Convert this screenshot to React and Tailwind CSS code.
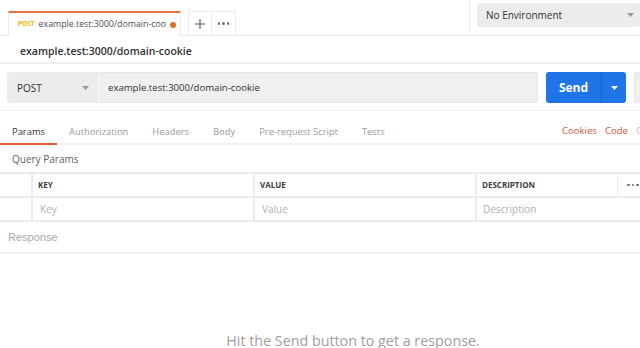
import React from "react";

const Caret = ({ className = "" }) => (
  <svg width="7" height="4" viewBox="0 0 7 4" className={className}>
    <path d="M0 0 L7 0 L3.5 4 Z" fill="currentColor" />
  </svg>
);

const Dots = ({ color = "bg-[#707070]" }) => (
  <>
    <span className={`w-[2.5px] h-[2.5px] rounded-full ${color}`} />
    <span className={`w-[2.5px] h-[2.5px] rounded-full ${color}`} />
    <span className={`w-[2.5px] h-[2.5px] rounded-full ${color}`} />
  </>
);

export default function App() {
  return (
    <div
      className="w-[640px] h-[348px] overflow-hidden bg-white flex flex-col text-[#505050]"
      style={{ fontFamily: '"Open Sans", "Noto Sans", sans-serif' }}
    >
      {/* Top tab bar */}
      <div className="h-[36px] flex shrink-0 border-b border-[#e8e8e8]">
        <div className="flex-1 flex items-end pl-[8px]">
          <div className="w-[173px] h-[25px] -mb-px bg-white border-t-2 border-[#e8703a] border-x border-x-[#ececec] flex items-center pl-[9px] pr-[4px]">
            <span className="text-[6.5px] font-bold text-[#ffb400] mr-[4px] leading-none">POST</span>
            <span className="text-[8.8px] text-[#505050] whitespace-nowrap leading-none">example.test:3000/domain-coo</span>
            <span className="ml-auto w-[6px] h-[6px] rounded-full bg-[#e07028]" />
          </div>
          <div className="ml-[7px] flex h-[24px] border border-[#ececec] border-b-0">
            <div className="w-[23px] flex items-center justify-center border-r border-[#ececec] text-[#606060]">
              <svg width="10" height="10" viewBox="0 0 10 10">
                <path d="M5 0 V10 M0 5 H10" stroke="currentColor" strokeWidth="1.2" />
              </svg>
            </div>
            <div className="w-[23px] flex items-center justify-center gap-[2px]">
              <Dots />
            </div>
          </div>
        </div>
        <div className="w-[171px] border-l border-[#ececec] pl-[7px] pt-[3px]">
          <div className="w-[163px] h-[24px] bg-[#ececec] rounded-[3px] flex items-center pl-[9px] pr-[6px]">
            <span className="text-[10px] text-[#333] leading-none">No Environment</span>
            <Caret className="ml-auto text-[#999]" />
          </div>
        </div>
      </div>

      {/* Request title */}
      <div className="h-[28px] shrink-0 flex items-center pt-[5px] pl-[20px] border-b-2 border-[#f0f0f0]">
        <span className="text-[10.5px] font-semibold text-[#333] leading-none">example.test:3000/domain-cookie</span>
      </div>

      {/* URL row */}
      <div className="h-[47px] shrink-0 flex items-start pt-[8px] pl-[7px] border-b border-[#f0f0f0]">
        <div className="w-[92px] h-[31px] bg-[#ececec] rounded-l-[3px] flex items-center pl-[10px] pr-[9px] border-r border-[#f8f8f8]">
          <span className="text-[10px] text-[#333] leading-none">POST</span>
          <Caret className="ml-auto text-[#999]" />
        </div>
        <div className="w-[439px] h-[31px] bg-[#f0f0f0] rounded-r-[3px] border border-[#e6e6e6] border-l-0 flex items-center pl-[9px]">
          <span className="text-[9.6px] text-[#333] leading-none">example.test:3000/domain-cookie</span>
        </div>
        <div className="ml-[8px] w-[80px] h-[31px] bg-[#1f74e8] rounded-[3px] flex items-center text-white">
          <div className="w-[56px] flex items-center justify-center h-full border-r border-[#1a63c8]">
            <span className="text-[12px] font-bold leading-none">Send</span>
          </div>
          <div className="flex-1 flex items-center justify-center">
            <Caret className="text-white" />
          </div>
        </div>
        <div className="ml-[8px] flex-1 h-[31px] bg-[#f0f0f0] border border-[#e6e6e6] border-r-0 rounded-l-[3px]" />
      </div>

      {/* Tabs */}
      <div className="h-[34px] shrink-0 flex items-end border-b-2 border-[#f0f0f0]">
        <div className="flex text-[9.4px] leading-none">
          <div className="px-[12px] pb-[7px] pt-[6px] text-[#333] border-b-2 border-[#e05a35] -mb-[2px]">Params</div>
          <div className="px-[12px] pb-[7px] pt-[6px] text-[#9a9a9a]">Authorization</div>
          <div className="px-[12px] pb-[7px] pt-[6px] text-[#9a9a9a]">Headers</div>
          <div className="px-[12px] pb-[7px] pt-[6px] text-[#9a9a9a]">Body</div>
          <div className="px-[12px] pb-[7px] pt-[6px] text-[#9a9a9a]">Pre-request Script</div>
          <div className="px-[12px] pb-[7px] pt-[6px] text-[#9a9a9a]">Tests</div>
        </div>
        <div className="ml-auto flex text-[9.6px] leading-none pb-[7px] whitespace-nowrap">
          <span className="text-[#d0573a]">Cookies</span>
          <span className="ml-[8px] text-[#d0573a]">Code</span>
          <span className="ml-[8px] text-[#c0c0c0] w-[4px] overflow-hidden">C</span>
        </div>
      </div>

      {/* Query params label */}
      <div className="h-[27px] shrink-0 flex items-center pl-[12px]">
        <span className="text-[10px] text-[#606060] leading-none">Query Params</span>
      </div>

      {/* Table */}
      <div className="shrink-0 border-y-2 border-[#ececec]">
        <div className="h-[24px] flex border-b-2 border-[#ececec]">
          <div className="w-[33px] border-r-2 border-[#ececec]" />
          <div className="w-[222px] border-r-2 border-[#ececec] flex items-center pl-[5px] text-[8px] font-bold text-[#404040]">KEY</div>
          <div className="w-[222px] border-r-2 border-[#ececec] flex items-center pl-[5px] text-[8px] font-bold text-[#404040]">VALUE</div>
          <div className="w-[141px] border-r border-[#ececec] flex items-center pl-[5px] text-[8px] font-bold text-[#404040]">DESCRIPTION</div>
          <div className="flex-1 flex items-center pl-[9px] gap-[2px]">
            <Dots />
          </div>
        </div>
        <div className="h-[22px] flex">
          <div className="w-[33px] border-r-2 border-[#ececec]" />
          <div className="w-[222px] border-r-2 border-[#ececec] flex items-center pl-[7px] text-[10px] text-[#b0b0b0]">Key</div>
          <div className="w-[222px] border-r-2 border-[#ececec] flex items-center pl-[7px] text-[10px] text-[#b0b0b0]">Value</div>
          <div className="flex-1 flex items-center pl-[6px] text-[10px] text-[#b0b0b0]">Description</div>
        </div>
      </div>

      {/* Response header */}
      <div className="h-[32px] shrink-0 flex items-center pl-[8px] border-b-2 border-[#f0f0f0]">
        <span
          className="text-[11px] text-[#a8a8a8] leading-none"
          style={{ fontFamily: '"Liberation Sans", Arial, sans-serif' }}
        >
          Response
        </span>
      </div>

      {/* Response body */}
      <div className="flex-1 flex flex-col items-center pt-[80px] pl-[66px]">
        <span className="text-[14.3px] text-[#a0a0a0] leading-none whitespace-nowrap">
          Hit the Send button to get a response.
        </span>
      </div>
    </div>
  );
}
